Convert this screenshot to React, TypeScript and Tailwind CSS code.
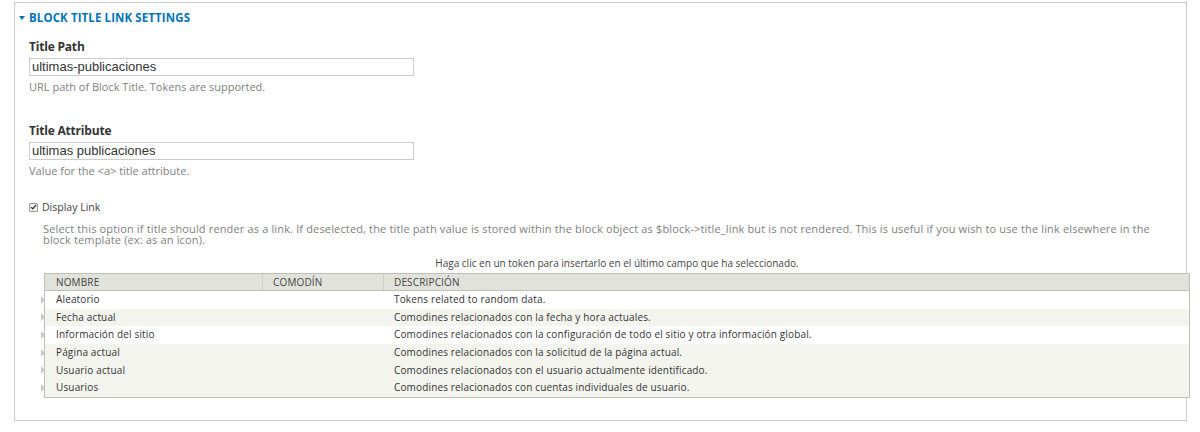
const rows = [
  { name: "Aleatorio", desc: "Tokens related to random data.", bg: "bg-white" },
  { name: "Fecha actual", desc: "Comodines relacionados con la fecha y hora actuales.", bg: "bg-[#f3f4ee]" },
  { name: "Información del sitio", desc: "Comodines relacionados con la configuración de todo el sitio y otra información global.", bg: "bg-white" },
  { name: "Página actual", desc: "Comodines relacionados con la solicitud de la página actual.", bg: "bg-[#f3f4ee]" },
  { name: "Usuario actual", desc: "Comodines relacionados con el usuario actualmente identificado.", bg: "bg-[#f3f4ee]" },
  { name: "Usuarios", desc: "Comodines relacionados con cuentas individuales de usuario.", bg: "bg-[#f3f4ee]" },
];

function Expander() {
  return (
    <span className="absolute left-[-4px] top-1/2 -translate-y-1/2 w-0 h-0 border-y-[4px] border-y-transparent border-l-[4px] border-l-[#c8c8c8]" />
  );
}

export default function App() {
  return (
    <div className="w-[1200px] h-[432px] bg-white overflow-hidden font-['Open_Sans',sans-serif] text-[#333]">
      {/* Fieldset */}
      <div className="ml-[14px] mt-[2px] w-[1173px] h-[419px] border border-[#cccccc]">
        {/* Legend */}
        <div className="flex items-center gap-[4px] pl-[4px] pt-[8px] h-[22px]">
          <span className="w-0 h-0 border-x-[3px] border-x-transparent border-t-[4px] border-t-[#0074bd]" />
          <span className="text-[11.5px] font-bold text-[#0074bd] tracking-[0.1px] leading-none">
            BLOCK TITLE LINK SETTINGS
          </span>
        </div>

        <div className="pl-[14px] pt-[15px]">
          {/* Title Path */}
          <div className="text-[12px] font-bold text-[#333] leading-[14px] tracking-[-0.2px]">Title Path</div>
          <input
            readOnly
            value="ultimas-publicaciones"
            className="mt-[4px] block w-[385px] h-[18px] border border-[#cccccc] px-[2px] text-[13px] font-['Liberation_Sans',sans-serif] text-[#333] outline-none"
          />
          <div className="mt-[5px] text-[11px] leading-[12px] text-[#808080]">URL path of Block Title. Tokens are supported.</div>

          {/* Title Attribute */}
          <div className="mt-[31px] text-[12px] font-bold text-[#333] leading-[14px] tracking-[-0.2px]">Title Attribute</div>
          <input
            readOnly
            value="ultimas publicaciones"
            className="mt-[4px] block w-[385px] h-[18px] border border-[#cccccc] px-[2px] text-[13px] font-['Liberation_Sans',sans-serif] text-[#333] outline-none"
          />
          <div className="mt-[5px] text-[11px] leading-[12px] text-[#808080]">Value for the &lt;a&gt; title attribute.</div>

          {/* Display Link */}
          <div className="mt-[24px] flex items-center gap-[4px] h-[12px]">
            <span className="w-[9px] h-[9px] border border-[#999] rounded-[1px] bg-[#eee] flex items-center justify-center">
              <svg viewBox="0 0 10 10" className="w-[8px] h-[8px]">
                <path d="M1.5 5.2 L4 7.6 L8.6 2" fill="none" stroke="#333" strokeWidth="1.8" />
              </svg>
            </span>
            <span className="text-[10.5px] leading-none text-[#444]">Display Link</span>
          </div>
          <div className="mt-[10px] pl-[14px] pr-[20px] text-[11px] leading-[11px] tracking-[0.15px] text-[#808080]">
            Select this option if title should render as a link. If deselected, the title path value is stored within the block object as $block-&gt;title_link but is not rendered. This is useful if you wish to use the link elsewhere in the block template (ex: as an icon).
          </div>

          {/* Token browser */}
          <div className="mt-[12px] pl-[15px]">
            <div className="text-center text-[10px] leading-[12px] text-[#444] w-[1146px]">
              Haga clic en un token para insertarlo en el último campo que ha seleccionado.
            </div>
            <div className="mt-[4px] w-[1146px] border border-[#bebfb9] text-[10px] tracking-[0.15px]">
              <div className="flex h-[17px] items-center bg-[#e1e2dc] border-b border-[#bebfb9] uppercase text-[#444]">
                <div className="w-[218px] pl-[11px] h-full flex items-center border-r border-[#cfd0ca]">Nombre</div>
                <div className="w-[121px] pl-[10px] h-full flex items-center border-r border-[#cfd0ca]">Comodín</div>
                <div className="flex-1 pl-[10px]">Descripción</div>
              </div>
              {rows.map((r) => (
                <div key={r.name} className={`relative flex h-[17.6px] items-center ${r.bg} text-[#333]`}>
                  <Expander />
                  <div className="w-[218px] pl-[11px]">{r.name}</div>
                  <div className="w-[121px]" />
                  <div className="flex-1 pl-[10px]">{r.desc}</div>
                </div>
              ))}
            </div>
          </div>
        </div>
      </div>
    </div>
  );
}
